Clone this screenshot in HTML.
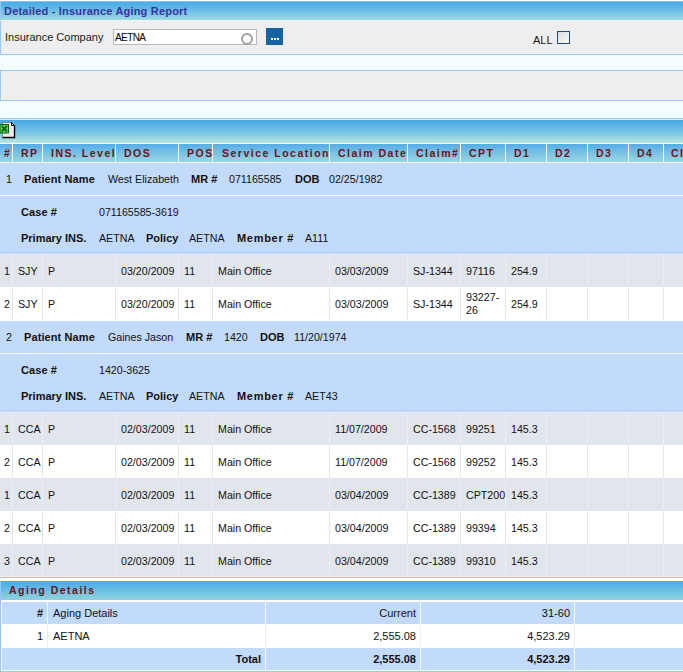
<!DOCTYPE html><html><head><meta charset="utf-8"><style>
html,body{margin:0;padding:0} body{width:683px;height:672px;overflow:hidden;position:relative;background:#fff;font-family:"Liberation Sans", sans-serif;font-size:11px}
.t{position:absolute;white-space:nowrap;line-height:13px;font-size:11px}
.r{position:absolute}
</style></head><body>
<div class="r" style="left:0px;top:1px;width:683px;height:53px;background:#eeeeee;border-left:1px solid #98c6fa;box-sizing:border-box"></div>
<div class="r" style="left:0px;top:1px;width:683px;height:1px;background:#84c2f2;"></div>
<div class="r" style="left:0px;top:2px;width:683px;height:18px;background:linear-gradient(#4aacea,#58b4e6 25%,#9ed8e4);"></div>
<div class="r" style="left:0px;top:1px;width:1px;height:54px;background:#98c6fa;"></div>
<div class="r" style="left:0px;top:20px;width:683px;height:1px;background:#eef6f2;"></div>
<div class="r" style="left:0px;top:54px;width:683px;height:1px;background:#98c6fa;"></div>
<div class="t" style="left:4px;top:5px;font-weight:bold;color:#3535a0;letter-spacing:0.2px">Detailed - Insurance Aging Report</div>
<div class="t" style="left:5px;top:31px;font-weight:normal;color:#1a1a1a;">Insurance Company</div>
<div class="r" style="left:113px;top:29px;width:144px;height:16px;background:#fff;border:1px solid #b8b8b8;box-sizing:border-box"></div>
<div class="t" style="left:115px;top:31px;font-weight:normal;color:#000;font-size:10px;letter-spacing:-0.6px">AETNA</div>
<div class="r" style="left:241px;top:33px;width:8px;height:8px;border:2px solid #a0a0a0;border-radius:50%"></div>
<div class="r" style="left:266px;top:28px;width:17px;height:17px;background:#1662a2;"></div>
<div class="r" style="left:271px;top:38px;width:2px;height:2px;background:#fff;"></div>
<div class="r" style="left:274px;top:38px;width:2px;height:2px;background:#fff;"></div>
<div class="r" style="left:277px;top:38px;width:2px;height:2px;background:#fff;"></div>
<div class="t" style="left:533px;top:34px;font-weight:normal;color:#1a1a1a;">ALL</div>
<div class="r" style="left:557px;top:31px;width:13px;height:13px;background:linear-gradient(135deg,#dcdcdc,#fafafa);border:1px solid #1f4f82;box-sizing:border-box"></div>
<div class="r" style="left:0px;top:55px;width:683px;height:15px;background:#f4fdff;"></div>
<div class="r" style="left:0px;top:70px;width:683px;height:1px;background:#98c6fa;"></div>
<div class="r" style="left:0px;top:71px;width:683px;height:29px;background:#eeeeee;border-left:1px solid #98c6fa;box-sizing:border-box"></div>
<div class="r" style="left:1px;top:71px;width:1px;height:29px;background:#f8f8f8;"></div>
<div class="r" style="left:0px;top:100px;width:683px;height:1px;background:#98c6fa;"></div>
<div class="r" style="left:0px;top:101px;width:683px;height:17px;background:#f4fdff;"></div>
<div class="r" style="left:0px;top:118px;width:683px;height:1px;background:#94c8f8;"></div>
<div class="r" style="left:0px;top:119px;width:683px;height:1px;background:#e6eef0;"></div>
<div class="r" style="left:0px;top:120px;width:683px;height:23px;background:linear-gradient(#4aa8e2,#58b2e6 20%,#80c8e4 60%,#bce6e0);"></div>
<svg class="r" style="left:0;top:119px" width="18" height="22" viewBox="0 0 18 22">
<path d="M2.5 3.5 H11.5 L14.5 6.5 V18.5 H2.5 Z" fill="#fafafa" stroke="#666" stroke-width="0.7"/>
<path d="M14.5 6.5 V18.5 H2.5" fill="none" stroke="#000" stroke-width="1.4"/>
<path d="M11.5 3.5 V6.5 H14.5 Z" fill="#fff" stroke="#000" stroke-width="1"/>
<path d="M9.5 8h3M9.5 10h3M9.5 12h3M9.5 14h3M4 16h8" stroke="#e2c8dc" stroke-width="0.8"/>
<rect x="0" y="5.5" width="8.5" height="8.5" fill="#5ccc5c" stroke="#0e6414" stroke-width="1.1"/>
<path d="M1.8 7.2 L6.8 12.3 M6.8 7.2 L1.8 12.3" stroke="#0a6010" stroke-width="1.7"/>
</svg>
<div class="r" style="left:0px;top:143px;width:683px;height:20px;background:#f4fafa;"></div>
<div class="r" style="left:0px;top:144px;width:12px;height:18px;background:linear-gradient(#56ace6,#7cc4e4 55%,#9ad6e4);"></div>
<div class="r" style="left:13px;top:144px;width:29px;height:18px;background:linear-gradient(#56ace6,#7cc4e4 55%,#9ad6e4);"></div>
<div class="r" style="left:43px;top:144px;width:72px;height:18px;background:linear-gradient(#56ace6,#7cc4e4 55%,#9ad6e4);"></div>
<div class="r" style="left:116px;top:144px;width:62px;height:18px;background:linear-gradient(#56ace6,#7cc4e4 55%,#9ad6e4);"></div>
<div class="r" style="left:179px;top:144px;width:33px;height:18px;background:linear-gradient(#56ace6,#7cc4e4 55%,#9ad6e4);"></div>
<div class="r" style="left:213px;top:144px;width:116px;height:18px;background:linear-gradient(#56ace6,#7cc4e4 55%,#9ad6e4);"></div>
<div class="r" style="left:330px;top:144px;width:77px;height:18px;background:linear-gradient(#56ace6,#7cc4e4 55%,#9ad6e4);"></div>
<div class="r" style="left:408px;top:144px;width:52px;height:18px;background:linear-gradient(#56ace6,#7cc4e4 55%,#9ad6e4);"></div>
<div class="r" style="left:461px;top:144px;width:44px;height:18px;background:linear-gradient(#56ace6,#7cc4e4 55%,#9ad6e4);"></div>
<div class="r" style="left:506px;top:144px;width:40px;height:18px;background:linear-gradient(#56ace6,#7cc4e4 55%,#9ad6e4);"></div>
<div class="r" style="left:547px;top:144px;width:40px;height:18px;background:linear-gradient(#56ace6,#7cc4e4 55%,#9ad6e4);"></div>
<div class="r" style="left:588px;top:144px;width:40px;height:18px;background:linear-gradient(#56ace6,#7cc4e4 55%,#9ad6e4);"></div>
<div class="r" style="left:629px;top:144px;width:34px;height:18px;background:linear-gradient(#56ace6,#7cc4e4 55%,#9ad6e4);"></div>
<div class="r" style="left:664px;top:144px;width:36px;height:18px;background:linear-gradient(#56ace6,#7cc4e4 55%,#9ad6e4);"></div>
<div class="t" style="left:4px;top:147px;font-weight:bold;color:#6e1418;letter-spacing:1.5px;font-size:10.5px">#</div>
<div class="t" style="left:21px;top:147px;font-weight:bold;color:#6e1418;letter-spacing:1.5px;font-size:10.5px">RP</div>
<div class="t" style="left:51px;top:147px;font-weight:bold;color:#6e1418;letter-spacing:1.5px;font-size:10.5px">INS. Level</div>
<div class="t" style="left:124px;top:147px;font-weight:bold;color:#6e1418;letter-spacing:1.5px;font-size:10.5px">DOS</div>
<div class="t" style="left:187px;top:147px;font-weight:bold;color:#6e1418;letter-spacing:1.5px;font-size:10.5px">POS</div>
<div class="t" style="left:222px;top:147px;font-weight:bold;color:#6e1418;letter-spacing:1.5px;font-size:10.5px">Service Location</div>
<div class="t" style="left:338px;top:147px;font-weight:bold;color:#6e1418;letter-spacing:1.5px;font-size:10.5px">Claim Date</div>
<div class="t" style="left:416px;top:147px;font-weight:bold;color:#6e1418;letter-spacing:1.5px;font-size:10.5px">Claim#</div>
<div class="t" style="left:469px;top:147px;font-weight:bold;color:#6e1418;letter-spacing:1.5px;font-size:10.5px">CPT</div>
<div class="t" style="left:514px;top:147px;font-weight:bold;color:#6e1418;letter-spacing:1.5px;font-size:10.5px">D1</div>
<div class="t" style="left:555px;top:147px;font-weight:bold;color:#6e1418;letter-spacing:1.5px;font-size:10.5px">D2</div>
<div class="t" style="left:596px;top:147px;font-weight:bold;color:#6e1418;letter-spacing:1.5px;font-size:10.5px">D3</div>
<div class="t" style="left:637px;top:147px;font-weight:bold;color:#6e1418;letter-spacing:1.5px;font-size:10.5px">D4</div>
<div class="t" style="left:671px;top:147px;font-weight:bold;color:#6e1418;letter-spacing:1.5px;font-size:10.5px">Claim Status</div>
<div class="r" style="left:0px;top:163px;width:683px;height:32px;background:#c2dafc;"></div>
<div class="r" style="left:0px;top:195px;width:683px;height:1px;background:#f0f8ff;"></div>
<div class="t" style="left:6px;top:173px;font-weight:normal;color:#111;font-size:10.67px">1</div>
<div class="t" style="left:24px;top:173px;font-weight:bold;color:#111;letter-spacing:0.1px">Patient Name</div>
<div class="t" style="left:108px;top:173px;font-weight:normal;color:#111;font-size:10.67px">West Elizabeth</div>
<div class="t" style="left:191px;top:173px;font-weight:bold;color:#111;">MR #</div>
<div class="t" style="left:229px;top:173px;font-weight:normal;color:#111;font-size:10.67px">071165585</div>
<div class="t" style="left:295px;top:173px;font-weight:bold;color:#111;">DOB</div>
<div class="t" style="left:329px;top:173px;font-weight:normal;color:#111;font-size:10.67px">02/25/1982</div>
<div class="r" style="left:0px;top:196px;width:683px;height:58px;background:#c2dafc;"></div>
<div class="t" style="left:21px;top:206px;font-weight:bold;color:#111;letter-spacing:0.1px">Case #</div>
<div class="t" style="left:99px;top:206px;font-weight:normal;color:#111;font-size:10.67px">071165585-3619</div>
<div class="t" style="left:21px;top:232px;font-weight:bold;color:#111;">Primary INS.</div>
<div class="t" style="left:99px;top:232px;font-weight:normal;color:#111;font-size:10.67px">AETNA</div>
<div class="t" style="left:146px;top:232px;font-weight:bold;color:#111;">Policy</div>
<div class="t" style="left:189px;top:232px;font-weight:normal;color:#111;font-size:10.67px">AETNA</div>
<div class="t" style="left:237px;top:232px;font-weight:bold;color:#111;letter-spacing:0.7px">Member #</div>
<div class="t" style="left:305px;top:232px;font-weight:normal;color:#111;font-size:10.67px">A111</div>
<div class="r" style="left:0px;top:254px;width:683px;height:33px;background:#e1e5ec;"></div>
<div class="r" style="left:12px;top:254px;width:1px;height:33px;background:#eceef4;"></div>
<div class="r" style="left:42px;top:254px;width:1px;height:33px;background:#eceef4;"></div>
<div class="r" style="left:115px;top:254px;width:1px;height:33px;background:#eceef4;"></div>
<div class="r" style="left:178px;top:254px;width:1px;height:33px;background:#eceef4;"></div>
<div class="r" style="left:212px;top:254px;width:1px;height:33px;background:#eceef4;"></div>
<div class="r" style="left:329px;top:254px;width:1px;height:33px;background:#eceef4;"></div>
<div class="r" style="left:407px;top:254px;width:1px;height:33px;background:#eceef4;"></div>
<div class="r" style="left:460px;top:254px;width:1px;height:33px;background:#eceef4;"></div>
<div class="r" style="left:505px;top:254px;width:1px;height:33px;background:#eceef4;"></div>
<div class="r" style="left:546px;top:254px;width:1px;height:33px;background:#eceef4;"></div>
<div class="r" style="left:587px;top:254px;width:1px;height:33px;background:#eceef4;"></div>
<div class="r" style="left:628px;top:254px;width:1px;height:33px;background:#eceef4;"></div>
<div class="r" style="left:663px;top:254px;width:1px;height:33px;background:#eceef4;"></div>
<div class="t" style="left:4px;top:265px;font-weight:normal;color:#111;font-size:10.67px">1</div>
<div class="t" style="left:18px;top:265px;font-weight:normal;color:#111;font-size:10.67px">SJY</div>
<div class="t" style="left:48px;top:265px;font-weight:normal;color:#111;font-size:10.67px">P</div>
<div class="t" style="left:121px;top:265px;font-weight:normal;color:#111;font-size:10.67px">03/20/2009</div>
<div class="t" style="left:184px;top:265px;font-weight:normal;color:#111;font-size:10.67px">11</div>
<div class="t" style="left:218px;top:265px;font-weight:normal;color:#111;font-size:10.67px">Main Office</div>
<div class="t" style="left:335px;top:265px;font-weight:normal;color:#111;font-size:10.67px">03/03/2009</div>
<div class="t" style="left:413px;top:265px;font-weight:normal;color:#111;font-size:10.67px">SJ-1344</div>
<div class="t" style="left:466px;top:265px;font-weight:normal;color:#111;font-size:10.67px">97116</div>
<div class="t" style="left:511px;top:265px;font-weight:normal;color:#111;font-size:10.67px">254.9</div>
<div class="r" style="left:0px;top:287px;width:683px;height:33px;background:#ffffff;"></div>
<div class="r" style="left:12px;top:287px;width:1px;height:33px;background:#e6e6e6;"></div>
<div class="r" style="left:42px;top:287px;width:1px;height:33px;background:#e6e6e6;"></div>
<div class="r" style="left:115px;top:287px;width:1px;height:33px;background:#e6e6e6;"></div>
<div class="r" style="left:178px;top:287px;width:1px;height:33px;background:#e6e6e6;"></div>
<div class="r" style="left:212px;top:287px;width:1px;height:33px;background:#e6e6e6;"></div>
<div class="r" style="left:329px;top:287px;width:1px;height:33px;background:#e6e6e6;"></div>
<div class="r" style="left:407px;top:287px;width:1px;height:33px;background:#e6e6e6;"></div>
<div class="r" style="left:460px;top:287px;width:1px;height:33px;background:#e6e6e6;"></div>
<div class="r" style="left:505px;top:287px;width:1px;height:33px;background:#e6e6e6;"></div>
<div class="r" style="left:546px;top:287px;width:1px;height:33px;background:#e6e6e6;"></div>
<div class="r" style="left:587px;top:287px;width:1px;height:33px;background:#e6e6e6;"></div>
<div class="r" style="left:628px;top:287px;width:1px;height:33px;background:#e6e6e6;"></div>
<div class="r" style="left:663px;top:287px;width:1px;height:33px;background:#e6e6e6;"></div>
<div class="t" style="left:4px;top:298px;font-weight:normal;color:#111;font-size:10.67px">2</div>
<div class="t" style="left:18px;top:298px;font-weight:normal;color:#111;font-size:10.67px">SJY</div>
<div class="t" style="left:48px;top:298px;font-weight:normal;color:#111;font-size:10.67px">P</div>
<div class="t" style="left:121px;top:298px;font-weight:normal;color:#111;font-size:10.67px">03/20/2009</div>
<div class="t" style="left:184px;top:298px;font-weight:normal;color:#111;font-size:10.67px">11</div>
<div class="t" style="left:218px;top:298px;font-weight:normal;color:#111;font-size:10.67px">Main Office</div>
<div class="t" style="left:335px;top:298px;font-weight:normal;color:#111;font-size:10.67px">03/03/2009</div>
<div class="t" style="left:413px;top:298px;font-weight:normal;color:#111;font-size:10.67px">SJ-1344</div>
<div class="t" style="left:466px;top:291px;font-weight:normal;color:#111;font-size:10.67px">93227-</div>
<div class="t" style="left:466px;top:304px;font-weight:normal;color:#111;font-size:10.67px">26</div>
<div class="t" style="left:511px;top:298px;font-weight:normal;color:#111;font-size:10.67px">254.9</div>
<div class="r" style="left:0px;top:321px;width:683px;height:32px;background:#c2dafc;"></div>
<div class="r" style="left:0px;top:353px;width:683px;height:1px;background:#f0f8ff;"></div>
<div class="t" style="left:6px;top:331px;font-weight:normal;color:#111;font-size:10.67px">2</div>
<div class="t" style="left:24px;top:331px;font-weight:bold;color:#111;letter-spacing:0.1px">Patient Name</div>
<div class="t" style="left:108px;top:331px;font-weight:normal;color:#111;font-size:10.67px">Gaines Jason</div>
<div class="t" style="left:186px;top:331px;font-weight:bold;color:#111;">MR #</div>
<div class="t" style="left:224px;top:331px;font-weight:normal;color:#111;font-size:10.67px">1420</div>
<div class="t" style="left:260px;top:331px;font-weight:bold;color:#111;">DOB</div>
<div class="t" style="left:294px;top:331px;font-weight:normal;color:#111;font-size:10.67px">11/20/1974</div>
<div class="r" style="left:0px;top:354px;width:683px;height:58px;background:#c2dafc;"></div>
<div class="t" style="left:21px;top:364px;font-weight:bold;color:#111;letter-spacing:0.1px">Case #</div>
<div class="t" style="left:99px;top:364px;font-weight:normal;color:#111;font-size:10.67px">1420-3625</div>
<div class="t" style="left:21px;top:390px;font-weight:bold;color:#111;">Primary INS.</div>
<div class="t" style="left:99px;top:390px;font-weight:normal;color:#111;font-size:10.67px">AETNA</div>
<div class="t" style="left:146px;top:390px;font-weight:bold;color:#111;">Policy</div>
<div class="t" style="left:189px;top:390px;font-weight:normal;color:#111;font-size:10.67px">AETNA</div>
<div class="t" style="left:237px;top:390px;font-weight:bold;color:#111;letter-spacing:0.7px">Member #</div>
<div class="t" style="left:305px;top:390px;font-weight:normal;color:#111;font-size:10.67px">AET43</div>
<div class="r" style="left:0px;top:412px;width:683px;height:33px;background:#e1e5ec;"></div>
<div class="r" style="left:12px;top:412px;width:1px;height:33px;background:#eceef4;"></div>
<div class="r" style="left:42px;top:412px;width:1px;height:33px;background:#eceef4;"></div>
<div class="r" style="left:115px;top:412px;width:1px;height:33px;background:#eceef4;"></div>
<div class="r" style="left:178px;top:412px;width:1px;height:33px;background:#eceef4;"></div>
<div class="r" style="left:212px;top:412px;width:1px;height:33px;background:#eceef4;"></div>
<div class="r" style="left:329px;top:412px;width:1px;height:33px;background:#eceef4;"></div>
<div class="r" style="left:407px;top:412px;width:1px;height:33px;background:#eceef4;"></div>
<div class="r" style="left:460px;top:412px;width:1px;height:33px;background:#eceef4;"></div>
<div class="r" style="left:505px;top:412px;width:1px;height:33px;background:#eceef4;"></div>
<div class="r" style="left:546px;top:412px;width:1px;height:33px;background:#eceef4;"></div>
<div class="r" style="left:587px;top:412px;width:1px;height:33px;background:#eceef4;"></div>
<div class="r" style="left:628px;top:412px;width:1px;height:33px;background:#eceef4;"></div>
<div class="r" style="left:663px;top:412px;width:1px;height:33px;background:#eceef4;"></div>
<div class="t" style="left:4px;top:423px;font-weight:normal;color:#111;font-size:10.67px">1</div>
<div class="t" style="left:18px;top:423px;font-weight:normal;color:#111;font-size:10.67px">CCA</div>
<div class="t" style="left:48px;top:423px;font-weight:normal;color:#111;font-size:10.67px">P</div>
<div class="t" style="left:121px;top:423px;font-weight:normal;color:#111;font-size:10.67px">02/03/2009</div>
<div class="t" style="left:184px;top:423px;font-weight:normal;color:#111;font-size:10.67px">11</div>
<div class="t" style="left:218px;top:423px;font-weight:normal;color:#111;font-size:10.67px">Main Office</div>
<div class="t" style="left:335px;top:423px;font-weight:normal;color:#111;font-size:10.67px">11/07/2009</div>
<div class="t" style="left:413px;top:423px;font-weight:normal;color:#111;font-size:10.67px">CC-1568</div>
<div class="t" style="left:466px;top:423px;font-weight:normal;color:#111;font-size:10.67px">99251</div>
<div class="t" style="left:511px;top:423px;font-weight:normal;color:#111;font-size:10.67px">145.3</div>
<div class="r" style="left:0px;top:445px;width:683px;height:33px;background:#ffffff;"></div>
<div class="r" style="left:12px;top:445px;width:1px;height:33px;background:#e6e6e6;"></div>
<div class="r" style="left:42px;top:445px;width:1px;height:33px;background:#e6e6e6;"></div>
<div class="r" style="left:115px;top:445px;width:1px;height:33px;background:#e6e6e6;"></div>
<div class="r" style="left:178px;top:445px;width:1px;height:33px;background:#e6e6e6;"></div>
<div class="r" style="left:212px;top:445px;width:1px;height:33px;background:#e6e6e6;"></div>
<div class="r" style="left:329px;top:445px;width:1px;height:33px;background:#e6e6e6;"></div>
<div class="r" style="left:407px;top:445px;width:1px;height:33px;background:#e6e6e6;"></div>
<div class="r" style="left:460px;top:445px;width:1px;height:33px;background:#e6e6e6;"></div>
<div class="r" style="left:505px;top:445px;width:1px;height:33px;background:#e6e6e6;"></div>
<div class="r" style="left:546px;top:445px;width:1px;height:33px;background:#e6e6e6;"></div>
<div class="r" style="left:587px;top:445px;width:1px;height:33px;background:#e6e6e6;"></div>
<div class="r" style="left:628px;top:445px;width:1px;height:33px;background:#e6e6e6;"></div>
<div class="r" style="left:663px;top:445px;width:1px;height:33px;background:#e6e6e6;"></div>
<div class="t" style="left:4px;top:456px;font-weight:normal;color:#111;font-size:10.67px">2</div>
<div class="t" style="left:18px;top:456px;font-weight:normal;color:#111;font-size:10.67px">CCA</div>
<div class="t" style="left:48px;top:456px;font-weight:normal;color:#111;font-size:10.67px">P</div>
<div class="t" style="left:121px;top:456px;font-weight:normal;color:#111;font-size:10.67px">02/03/2009</div>
<div class="t" style="left:184px;top:456px;font-weight:normal;color:#111;font-size:10.67px">11</div>
<div class="t" style="left:218px;top:456px;font-weight:normal;color:#111;font-size:10.67px">Main Office</div>
<div class="t" style="left:335px;top:456px;font-weight:normal;color:#111;font-size:10.67px">11/07/2009</div>
<div class="t" style="left:413px;top:456px;font-weight:normal;color:#111;font-size:10.67px">CC-1568</div>
<div class="t" style="left:466px;top:456px;font-weight:normal;color:#111;font-size:10.67px">99252</div>
<div class="t" style="left:511px;top:456px;font-weight:normal;color:#111;font-size:10.67px">145.3</div>
<div class="r" style="left:0px;top:478px;width:683px;height:33px;background:#e1e5ec;"></div>
<div class="r" style="left:12px;top:478px;width:1px;height:33px;background:#eceef4;"></div>
<div class="r" style="left:42px;top:478px;width:1px;height:33px;background:#eceef4;"></div>
<div class="r" style="left:115px;top:478px;width:1px;height:33px;background:#eceef4;"></div>
<div class="r" style="left:178px;top:478px;width:1px;height:33px;background:#eceef4;"></div>
<div class="r" style="left:212px;top:478px;width:1px;height:33px;background:#eceef4;"></div>
<div class="r" style="left:329px;top:478px;width:1px;height:33px;background:#eceef4;"></div>
<div class="r" style="left:407px;top:478px;width:1px;height:33px;background:#eceef4;"></div>
<div class="r" style="left:460px;top:478px;width:1px;height:33px;background:#eceef4;"></div>
<div class="r" style="left:505px;top:478px;width:1px;height:33px;background:#eceef4;"></div>
<div class="r" style="left:546px;top:478px;width:1px;height:33px;background:#eceef4;"></div>
<div class="r" style="left:587px;top:478px;width:1px;height:33px;background:#eceef4;"></div>
<div class="r" style="left:628px;top:478px;width:1px;height:33px;background:#eceef4;"></div>
<div class="r" style="left:663px;top:478px;width:1px;height:33px;background:#eceef4;"></div>
<div class="t" style="left:4px;top:489px;font-weight:normal;color:#111;font-size:10.67px">1</div>
<div class="t" style="left:18px;top:489px;font-weight:normal;color:#111;font-size:10.67px">CCA</div>
<div class="t" style="left:48px;top:489px;font-weight:normal;color:#111;font-size:10.67px">P</div>
<div class="t" style="left:121px;top:489px;font-weight:normal;color:#111;font-size:10.67px">02/03/2009</div>
<div class="t" style="left:184px;top:489px;font-weight:normal;color:#111;font-size:10.67px">11</div>
<div class="t" style="left:218px;top:489px;font-weight:normal;color:#111;font-size:10.67px">Main Office</div>
<div class="t" style="left:335px;top:489px;font-weight:normal;color:#111;font-size:10.67px">03/04/2009</div>
<div class="t" style="left:413px;top:489px;font-weight:normal;color:#111;font-size:10.67px">CC-1389</div>
<div class="t" style="left:466px;top:489px;font-weight:normal;color:#111;font-size:10.67px">CPT200</div>
<div class="t" style="left:511px;top:489px;font-weight:normal;color:#111;font-size:10.67px">145.3</div>
<div class="r" style="left:0px;top:511px;width:683px;height:33px;background:#ffffff;"></div>
<div class="r" style="left:12px;top:511px;width:1px;height:33px;background:#e6e6e6;"></div>
<div class="r" style="left:42px;top:511px;width:1px;height:33px;background:#e6e6e6;"></div>
<div class="r" style="left:115px;top:511px;width:1px;height:33px;background:#e6e6e6;"></div>
<div class="r" style="left:178px;top:511px;width:1px;height:33px;background:#e6e6e6;"></div>
<div class="r" style="left:212px;top:511px;width:1px;height:33px;background:#e6e6e6;"></div>
<div class="r" style="left:329px;top:511px;width:1px;height:33px;background:#e6e6e6;"></div>
<div class="r" style="left:407px;top:511px;width:1px;height:33px;background:#e6e6e6;"></div>
<div class="r" style="left:460px;top:511px;width:1px;height:33px;background:#e6e6e6;"></div>
<div class="r" style="left:505px;top:511px;width:1px;height:33px;background:#e6e6e6;"></div>
<div class="r" style="left:546px;top:511px;width:1px;height:33px;background:#e6e6e6;"></div>
<div class="r" style="left:587px;top:511px;width:1px;height:33px;background:#e6e6e6;"></div>
<div class="r" style="left:628px;top:511px;width:1px;height:33px;background:#e6e6e6;"></div>
<div class="r" style="left:663px;top:511px;width:1px;height:33px;background:#e6e6e6;"></div>
<div class="t" style="left:4px;top:522px;font-weight:normal;color:#111;font-size:10.67px">2</div>
<div class="t" style="left:18px;top:522px;font-weight:normal;color:#111;font-size:10.67px">CCA</div>
<div class="t" style="left:48px;top:522px;font-weight:normal;color:#111;font-size:10.67px">P</div>
<div class="t" style="left:121px;top:522px;font-weight:normal;color:#111;font-size:10.67px">02/03/2009</div>
<div class="t" style="left:184px;top:522px;font-weight:normal;color:#111;font-size:10.67px">11</div>
<div class="t" style="left:218px;top:522px;font-weight:normal;color:#111;font-size:10.67px">Main Office</div>
<div class="t" style="left:335px;top:522px;font-weight:normal;color:#111;font-size:10.67px">03/04/2009</div>
<div class="t" style="left:413px;top:522px;font-weight:normal;color:#111;font-size:10.67px">CC-1389</div>
<div class="t" style="left:466px;top:522px;font-weight:normal;color:#111;font-size:10.67px">99394</div>
<div class="t" style="left:511px;top:522px;font-weight:normal;color:#111;font-size:10.67px">145.3</div>
<div class="r" style="left:0px;top:544px;width:683px;height:33px;background:#e1e5ec;"></div>
<div class="r" style="left:12px;top:544px;width:1px;height:33px;background:#eceef4;"></div>
<div class="r" style="left:42px;top:544px;width:1px;height:33px;background:#eceef4;"></div>
<div class="r" style="left:115px;top:544px;width:1px;height:33px;background:#eceef4;"></div>
<div class="r" style="left:178px;top:544px;width:1px;height:33px;background:#eceef4;"></div>
<div class="r" style="left:212px;top:544px;width:1px;height:33px;background:#eceef4;"></div>
<div class="r" style="left:329px;top:544px;width:1px;height:33px;background:#eceef4;"></div>
<div class="r" style="left:407px;top:544px;width:1px;height:33px;background:#eceef4;"></div>
<div class="r" style="left:460px;top:544px;width:1px;height:33px;background:#eceef4;"></div>
<div class="r" style="left:505px;top:544px;width:1px;height:33px;background:#eceef4;"></div>
<div class="r" style="left:546px;top:544px;width:1px;height:33px;background:#eceef4;"></div>
<div class="r" style="left:587px;top:544px;width:1px;height:33px;background:#eceef4;"></div>
<div class="r" style="left:628px;top:544px;width:1px;height:33px;background:#eceef4;"></div>
<div class="r" style="left:663px;top:544px;width:1px;height:33px;background:#eceef4;"></div>
<div class="t" style="left:4px;top:555px;font-weight:normal;color:#111;font-size:10.67px">3</div>
<div class="t" style="left:18px;top:555px;font-weight:normal;color:#111;font-size:10.67px">CCA</div>
<div class="t" style="left:48px;top:555px;font-weight:normal;color:#111;font-size:10.67px">P</div>
<div class="t" style="left:121px;top:555px;font-weight:normal;color:#111;font-size:10.67px">02/03/2009</div>
<div class="t" style="left:184px;top:555px;font-weight:normal;color:#111;font-size:10.67px">11</div>
<div class="t" style="left:218px;top:555px;font-weight:normal;color:#111;font-size:10.67px">Main Office</div>
<div class="t" style="left:335px;top:555px;font-weight:normal;color:#111;font-size:10.67px">03/04/2009</div>
<div class="t" style="left:413px;top:555px;font-weight:normal;color:#111;font-size:10.67px">CC-1389</div>
<div class="t" style="left:466px;top:555px;font-weight:normal;color:#111;font-size:10.67px">99310</div>
<div class="t" style="left:511px;top:555px;font-weight:normal;color:#111;font-size:10.67px">145.3</div>
<div class="r" style="left:0px;top:251px;width:683px;height:3px;background:#bcd6fa;"></div>
<div class="r" style="left:0px;top:254px;width:683px;height:1px;background:#e9eef4;"></div>
<div class="r" style="left:0px;top:409px;width:683px;height:3px;background:#bcd6fa;"></div>
<div class="r" style="left:0px;top:412px;width:683px;height:1px;background:#e9eef4;"></div>
<div class="r" style="left:0px;top:576px;width:683px;height:1px;background:#eef0ee;"></div>
<div class="r" style="left:0px;top:577px;width:683px;height:1px;background:#a0c4f6;"></div>
<div class="r" style="left:0px;top:578px;width:683px;height:3px;background:#ffffff;"></div>
<div class="r" style="left:0px;top:581px;width:683px;height:18px;background:linear-gradient(#4aaae6,#62b8e4 40%,#8cd2dc);border-left:1px solid #98c6fa;box-sizing:border-box"></div>
<div class="r" style="left:0px;top:599px;width:683px;height:1px;background:#94c4f4;"></div>
<div class="t" style="left:9px;top:584px;font-weight:bold;color:#6e1418;letter-spacing:1.5px;font-size:10.5px">Aging Details</div>
<div class="r" style="left:0px;top:600px;width:683px;height:72px;background:#ffffff;border-left:1px solid #98c6fa;box-sizing:border-box"></div>
<div class="r" style="left:2px;top:602px;width:681px;height:22px;background:#c2dafc;"></div>
<div class="r" style="left:2px;top:624px;width:681px;height:24px;background:#ffffff;"></div>
<div class="r" style="left:2px;top:648px;width:681px;height:22px;background:#c2dafc;"></div>
<div class="r" style="left:0px;top:671px;width:683px;height:1px;background:#98c6fa;"></div>
<div class="r" style="left:47px;top:602px;width:1px;height:22px;background:#f4f8ff;"></div>
<div class="r" style="left:47px;top:624px;width:1px;height:24px;background:#eeeeee;"></div>
<div class="r" style="left:265px;top:602px;width:1px;height:22px;background:#f4f8ff;"></div>
<div class="r" style="left:265px;top:624px;width:1px;height:24px;background:#eeeeee;"></div>
<div class="r" style="left:265px;top:648px;width:1px;height:22px;background:#f4f8ff;"></div>
<div class="r" style="left:420px;top:602px;width:1px;height:22px;background:#f4f8ff;"></div>
<div class="r" style="left:420px;top:624px;width:1px;height:24px;background:#eeeeee;"></div>
<div class="r" style="left:420px;top:648px;width:1px;height:22px;background:#f4f8ff;"></div>
<div class="r" style="left:574px;top:602px;width:1px;height:22px;background:#f4f8ff;"></div>
<div class="r" style="left:574px;top:624px;width:1px;height:24px;background:#eeeeee;"></div>
<div class="r" style="left:574px;top:648px;width:1px;height:22px;background:#f4f8ff;"></div>
<div class="t" style="right:640px;top:607px;font-weight:bold;color:#111;">#</div>
<div class="t" style="left:53px;top:607px;font-weight:normal;color:#111;">Aging Details</div>
<div class="t" style="right:267px;top:607px;font-weight:normal;color:#111;">Current</div>
<div class="t" style="right:113px;top:607px;font-weight:normal;color:#111;">31-60</div>
<div class="t" style="right:640px;top:630px;font-weight:normal;color:#111;">1</div>
<div class="t" style="left:53px;top:630px;font-weight:normal;color:#111;">AETNA</div>
<div class="t" style="right:267px;top:630px;font-weight:normal;color:#111;">2,555.08</div>
<div class="t" style="right:113px;top:630px;font-weight:normal;color:#111;">4,523.29</div>
<div class="t" style="right:422px;top:653px;font-weight:bold;color:#111;">Total</div>
<div class="t" style="right:267px;top:653px;font-weight:bold;color:#111;">2,555.08</div>
<div class="t" style="right:113px;top:653px;font-weight:bold;color:#111;">4,523.29</div>
</body></html>
